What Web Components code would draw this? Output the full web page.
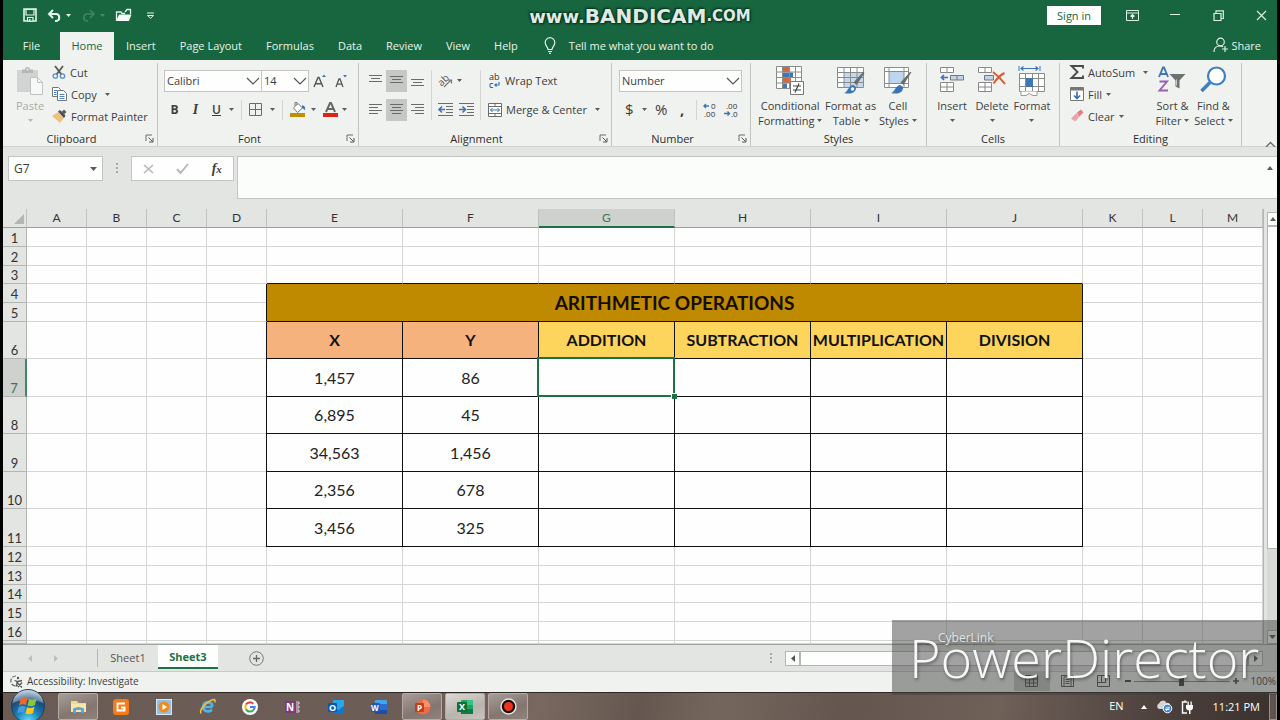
<!DOCTYPE html>
<html lang="en">
<head>
<meta charset="UTF-8">
<meta name="viewport" content="width=device-width, initial-scale=1.0">
<title>Sheet3 - Excel</title>
<style>
    :root {
        --green: #17663f;
        --ribbon: #f0f2f0;
        --chrome: #e3e5e3;
        --line: #c3c5c3;
        --grid: #d4d6d4;
        --ink: #3c3e3d;
        --ui: "Open Sans", "Noto Sans", sans-serif;
        --cell: Lato, "Liberation Sans", sans-serif;
    }

    body {
        margin: 0;
        background: #000;
        color: var(--ink);
        font-family: var(--ui);
        font-size: 11px;
        line-height: 15px;
    }
</style>
</head>
<body>
<excel-window></excel-window>

<script>
// Shared rules, form controls do not inherit the font by themselves
const BASE = `
    * { box-sizing: border-box; }
    button, select, input, textarea {
        font: inherit;
        color: inherit;
        margin: 0;
        padding: 0;
        border: 0;
        background: none;
        border-radius: 0;
    }
    button { display: inline-flex; align-items: center; justify-content: center; cursor: pointer; }
`;

// name: [width, height, markup]
const ICONS = {
    caret: [5, 3, '<path d="M0 0h5L2.500 3z" fill="#5a5c5b"/>'],
    caretLight: [5, 3, '<path d="M0 0h5L2.500 3z" fill="#e8f2ec"/>'],
    caretDim: [5, 3, '<path d="M0 0h5L2.500 3z" fill="#4c8a69"/>'],
    caretGray: [5, 3, '<path d="M0 0h5L2.500 3z" fill="#b4b6b5"/>'],
    chevron: [14, 8, '<path d="M1 1l6 6 6-6" fill="none" stroke="#555" stroke-width="1.2"/>'],
    launcher: [9, 9, '<path d="M1 7V1h6" fill="none" stroke="#6a6c6b"/><path d="M3.500 3.500l4 4M8 4v4H4" fill="none" stroke="#555"/>'],
    save: [14, 14, '<path d="M1 1h12v12H1z" fill="none" stroke="#e6f3eb" stroke-width="1.6"/><path d="M3 1.500h8V7H3zM4.500 9.500h5.500V13H4.500z" fill="#17663f" stroke="#e6f3eb" stroke-width="1.2"/><path d="M6 11h1.500v2H6z" fill="#e6f3eb"/>'],
    undo: [15, 13, '<path d="M2 5h7.500a3.600 3.600 0 0 1 0 7H8M6 1L2 5l4 4" fill="none" stroke="#e6f3eb" stroke-width="2"/>'],
    redo: [15, 13, '<path d="M13 5H5.500a3.600 3.600 0 0 0 0 7H7M9 1l4 4-4 4" fill="none" stroke="#3f8460" stroke-width="1.600"/>'],
    folder: [17, 14, '<path d="M1.500 12.500V4h4.500l1 1.500h3" fill="none" stroke="#e6f3eb" stroke-width="1.300"/><path d="M10 4l2-2.500h3.500V6" fill="none" stroke="#e6f3eb" stroke-width="1.300"/><path d="M1 13L4 6.500h12.500L14 13z" fill="#f4faf6"/>'],
    customise: [9, 7, '<path d="M1 1h7" stroke="#e6f3eb"/><path d="M1.500 3.500h6L4.500 6.300z" fill="none" stroke="#e6f3eb"/>'],
    ribbonOpts: [13, 11, '<path d="M.5.5h12v10H.5zM.5 3h12" fill="none" stroke="#dff0e6"/><path d="M6.500 9V5M4.500 6.500l2-2 2 2" fill="none" stroke="#dff0e6" stroke-width="1.200"/>'],
    minimise: [10, 2, '<path d="M0 .5h10" stroke="#dff0e6"/>'],
    restore: [11, 11, '<path d="M1 3.500h7v7H1zM3 3V.8h7.300V8.500H8.500" fill="none" stroke="#dff0e6" stroke-width="1.200"/>'],
    close: [11, 11, '<path d="M1 1l9 9M10 1l-9 9" stroke="#dff0e6" stroke-width="1.100"/>'],
    bulb: [12, 17, '<path d="M4 12.500c0-2.500-2.800-3.500-2.800-7a4.800 4.800 0 0 1 9.600 0c0 3.500-2.800 4.500-2.800 7zM4 14.500h4M5 16.300h2" fill="none" stroke="#dff0e6" stroke-width="1.200"/>'],
    share: [16, 16, '<circle cx="7.500" cy="5" r="3.800" fill="none" stroke="#dff0e6" stroke-width="1.200"/><path d="M1 15c0-4 2.500-6 6-6 1 0 2 .2 3 .8M12 9v6M9 12h6" fill="none" stroke="#dff0e6" stroke-width="1.200"/>'],
    paste: [28, 30, '<path d="M1 4h21v22H1z" fill="#d2d4d3"/><path d="M6 7V3.500h3a2.500 2.500 0 0 1 5 0h3V7z" fill="#b5b7b6"/><circle cx="11.500" cy="3.500" r="1" fill="#eee"/><path d="M14.500 11.500h7l5 5v12h-12z" fill="#f7f8f7" stroke="#c0c2c1"/><path d="M21.500 11.500v5h5" fill="none" stroke="#c0c2c1"/>'],
    cut: [14, 14, '<path d="M3 1l6.500 8.500M11 1L4.500 9.500" stroke="#5a5c5b" stroke-width="1.900"/><circle cx="3.300" cy="11" r="2.200" fill="none" stroke="#5b8fc4" stroke-width="1.300"/><circle cx="10.500" cy="11" r="2.200" fill="none" stroke="#5b8fc4" stroke-width="1.300"/>'],
    copy: [15, 14, '<path d="M.5.5h6l2 2v7h-8z" fill="#fff" stroke="#747675"/><path d="M5.500 3.500h6l3 3v7h-9z" fill="#fff" stroke="#747675"/><path d="M2 3.500h3M2 5.500h2.500M2 7.500h2.500M7.500 7.500h5M7.500 9.500h5M7.500 11.500h5" stroke="#4c85c0"/>'],
    painter: [15, 14, '<path d="M6 3l6 6-4 5-8-7z" fill="#efc27c"/><path d="M6 2.500l2-1.500 5.500 5.500L12 9z" fill="#4a4c4b"/><path d="M9.500 3L12 .5 14.500 3 12 5.500z" fill="#5a5c5b"/>'],
    growFont: [14, 14, '<path d="M1 13L5 3.500h1L10 13M2.700 9.700h5.800" fill="none" stroke="#555" stroke-width="1.400"/><path d="M9 3h4l-2-2.500z" fill="#3b74b4"/>'],
    shrinkFont: [14, 14, '<path d="M2 13l3-8h1l3 8M3.300 10.200h4.500" fill="none" stroke="#555" stroke-width="1.300"/><path d="M9 1h4l-2 2.500z" fill="#3b74b4"/>'],
    borders: [13, 13, '<path d="M.5.5h12v12H.5zM6.500.5v12M.5 6.500h12" fill="none" stroke="#6a6c6b"/>'],
    fillColor: [17, 15, '<path d="M0 11h15v4H0z" fill="#bf8f00"/><path d="M3.500 6L8 1.500 12.500 6 7.500 10.500z" fill="#fff" stroke="#777"/><path d="M5 4V.5h2V3" fill="none" stroke="#777"/><path d="M12 3.500c3 0 3.500 2 3 5-.8-1.500-1.500-2-3-2z" fill="#3b74b4"/>'],
    fontColor: [15, 15, '<path d="M0 11h15v4H0z" fill="#dd2416"/><path d="M3 10L7 1h1l4 9M4.500 7h6" fill="none" stroke="#666" stroke-width="1.900"/>'],
    alignTop: [13, 11, '<path d="M0 .5h13M2 3.500h9M0 6.500h13" stroke="#6a6c6b"/>'],
    alignMid: [13, 11, '<path d="M0 1.500h13M2 4.500h9M0 7.500h13" stroke="#6a6c6b"/>'],
    alignBottom: [13, 13, '<path d="M0 5.500h13M2 8.500h9M0 11.500h13" stroke="#6a6c6b"/>'],
    alignLeft: [13, 11, '<path d="M0 .5h13M0 3.500h9M0 6.500h13M0 9.500h9" stroke="#6a6c6b"/>'],
    alignCenter: [13, 11, '<path d="M0 .5h13M2 3.500h9M0 6.500h13M2 9.500h9" stroke="#6a6c6b"/>'],
    alignRight: [13, 11, '<path d="M0 .5h13M4 3.500h9M0 6.500h13M4 9.500h9" stroke="#6a6c6b"/>'],
    orient: [15, 14, '<text x="0" y="10" transform="rotate(-45 5 7)" font-size="10" font-family="Open Sans" fill="#555">ab</text><path d="M6 13l7-7M10 6h3.500v3.500" fill="none" stroke="#777" stroke-width="1.200"/>'],
    outdent: [15, 13, '<path d="M0 .5h15M8 3.500h7M8 6.500h7M8 9.500h7M0 12.500h15" stroke="#6a6c6b"/><path d="M7 6.500H1.500M4 3.500l-3 3 3 3" fill="none" stroke="#3b74b4" stroke-width="1.600"/>'],
    indent: [15, 13, '<path d="M0 .5h15M8 3.500h7M8 6.500h7M8 9.500h7M0 12.500h15" stroke="#6a6c6b"/><path d="M0 6.500h5.500M3.500 3.500l3 3-3 3" fill="none" stroke="#3b74b4" stroke-width="1.600"/>'],
    wrap: [13, 14, '<text x="1" y="6" font-size="9" font-family="Open Sans" fill="#333">ab</text><text x="1" y="14" font-size="9" font-family="Open Sans" fill="#333">c</text><path d="M11 8v3H7M8.500 9.500L7 11l1.500 1.500" fill="none" stroke="#3b74b4" stroke-width="1.200"/>'],
    merge: [14, 14, '<path d="M.5.5h13v13H.5zM.5 3.500h13M.5 10.500h13M7 .5v3M7 10.500v3" fill="#fff" stroke="#6a6c6b"/><path d="M2.500 7h9M4.500 5l-2 2 2 2M9.500 5l2 2-2 2" fill="none" stroke="#3b74b4"/>'],
    incDec: [14, 14, '<text x="8" y="6" font-size="8" font-family="Open Sans" fill="#333">0</text><text x="1" y="14" font-size="8" font-family="Open Sans" fill="#333">.00</text><path d="M6 3H1M3 1L1 3l2 2" fill="none" stroke="#3b74b4" stroke-width="1.400"/>'],
    decDec: [14, 14, '<text x="2" y="6" font-size="8" font-family="Open Sans" fill="#333">.00</text><text x="7" y="14" font-size="8" font-family="Open Sans" fill="#333">.0</text><path d="M0 10.500h5M3.500 8.500l2 2-2 2" fill="none" stroke="#3b74b4" stroke-width="1.400"/>'],
    condFormat: [28, 29, '<path d="M.5.5h25v22H.5z" fill="#fff"/><path d="M7 1h6v5H7zM7 12h8v5H7z" fill="#d0693f"/><path d="M7 6.500h10v5H7zM7 17.500h4v5H7z" fill="#3c78b4"/><path d="M.5.500h25v22H.5zM.5 6h25M.5 11.500h25M.5 17h25M6.500.5v22M13.500.5v22M19.500.5v22" fill="none" stroke="#8a8c8b"/><path d="M14.500 15.500h13v13h-13z" fill="#fff" stroke="#777"/><path d="M17 20h8M17 24h8M23 17.500l-4 9" stroke="#444" stroke-width="1.200"/>'],
    tableFormat: [28, 29, '<path d="M.5 1.500h26v20H.5z" fill="#fff"/><path d="M7 7h19v14H7z" fill="#c4d9ee"/><path d="M.5 1.500h26v20H.5zM.5 6.500h26M.5 11.500h26M.5 16.500h26M7 1.500v20M13.500 1.500v20M20 1.500v20" fill="none" stroke="#8a8c8b"/><path d="M27.500 7l-8 12-3-2.500L26 6z" fill="#6a6c6b"/><path d="M7 27c4-1 4-7 9-8 3 1 4 3 2 6-2.500 3-7 3-11 2z" fill="#3b74b4"/><circle cx="15.500" cy="23" r="1.800" fill="#fff"/>'],
    cellStyles: [28, 29, '<path d="M.5 1.500h24v20H.5z" fill="#fff"/><path d="M5 6h15v11H5z" fill="#bdd5ee"/><path d="M.5 1.500h24v20H.5zM.5 5.500h24M.5 17.500h24M5 1.500v20M20 1.500v20" fill="none" stroke="#8a8c8b"/><path d="M27.500 6l-8 13-3-2.500L26 6z" fill="#6a6c6b"/><path d="M7 27c4-1 4-7 9-8 3 1 4 3 2 6-2.500 3-7 3-11 2z" fill="#3b74b4"/>'],
    insertCells: [26, 27, '<path d="M1.500 1.500h13v5h-13zM8 1.500v5M1.500 16.500h13v9h-13zM8 16.500v9M1.500 21h13" fill="#fff" stroke="#888"/><path d="M11.500 9.500h13v4.500h-13zM18 9.500v4.500" fill="#c4d4e6" stroke="#777"/><path d="M9 11.500H2.500M5 9l-2.500 2.500L5 14" fill="none" stroke="#3b74b4" stroke-width="1.700"/>'],
    deleteCells: [28, 27, '<path d="M.5 1.500h13v5H.5zM7 1.500v5M.5 16.500h13v9H.5zM7 16.500v9M.5 21h13" fill="#fff" stroke="#888"/><path d="M6.500 9.500h9v4.500h-9z" fill="#c4d4e6" stroke="#777"/><path d="M15 6c4 3 8 7 12 12M26.500 7c-4 2-8 6-11 10.500" fill="none" stroke="#dc5a30" stroke-width="2"/>'],
    formatCells: [28, 30, '<path d="M1 0v5M22 0v5" stroke="#3b74b4"/><path d="M3 2.500h17M5.500.5l-2.500 2 2.500 2M17.500.5l2.500 2-2.500 2" fill="none" stroke="#3b74b4" stroke-width="1.200"/><path d="M1.500 7.500h25v18h-25zM1.500 12.500h25M1.500 20.500h25M7.500 7.500v18M14.500 7.500v18M20.500 7.500v18" fill="#fff" stroke="#8a8c8b"/><path d="M8 12h7v9H8z" fill="#3c78b4"/><path d="M3 25.500v4h5l3-2 4 2h4v-4" fill="#fff" stroke="#999"/>'],
    sigma: [14, 14, '<path d="M13 3.500V1H1.500L7.500 7l-6 6H13v-2.500" fill="none" stroke="#4a4c4b" stroke-width="1.900"/>'],
    fill: [14, 14, '<path d="M.5.500h13v13H.5z" fill="#fff" stroke="#777"/><path d="M.5.500h13v3H.5z" fill="#777"/><path d="M7 4.500v7M4 8.500l3 3 3-3" fill="none" stroke="#3b74b4" stroke-width="1.700"/>'],
    clear: [14, 14, '<path d="M7 3.500L11 .5l2.500 3L9 8z" fill="#e0808a"/><path d="M6.500 4l2.700 4-4 4.500L1 9.500z" fill="#eda2a8"/>'],
    sortFilter: [28, 28, '<path d="M1 11L5 1.500h1L10 11M2.600 8h6" fill="none" stroke="#3c78b4" stroke-width="1.900"/><path d="M1.500 15.500h7.500l-7.500 9H10" fill="none" stroke="#9a5fb4" stroke-width="1.900"/><path d="M11.500 8h16l-6 6.500v8l-4-2v-6z" fill="#6f7170"/><path d="M18.500 13.500v6" stroke="#ccc"/>'],
    find: [28, 28, '<circle cx="17.500" cy="10" r="8.500" fill="#fff" stroke="#3e7fc1" stroke-width="2.200"/><path d="M11 16.500L2.500 25" stroke="#3e7fc1" stroke-width="3.600"/>'],
    collapse: [11, 7, '<path d="M1 6l4.500-4.500L10 6" fill="none" stroke="#666" stroke-width="1.300"/>'],
    cross: [11, 10, '<path d="M1 1l9 8M10 1L1 9" stroke="#b6b8b7" stroke-width="1.600"/>'],
    check: [13, 11, '<path d="M1 6l3.500 4L12 1" fill="none" stroke="#b6b8b7" stroke-width="1.900"/>'],
    dots: [3, 11, '<path d="M0 0h2v2H0zM0 4h2v2H0zM0 8h2v2H0z" fill="#a8aaa9"/>'],
    caretUp: [6, 4, '<path d="M0 4h6L3 0z" fill="#5a5c5b"/>'],
    caretDown: [7, 4, '<path d="M0 0h7L3.500 4z" fill="#5a5c5b"/>'],
    left: [4, 7, '<path d="M4 0v7L0 3.500z" fill="currentColor"/>'],
    right: [4, 7, '<path d="M0 0v7l4-3.500z" fill="currentColor"/>'],
    plus: [15, 15, '<circle cx="7.500" cy="7.500" r="6.800" fill="none" stroke="#777"/><path d="M7.500 4v7M4 7.500h7" stroke="#666" stroke-width="1.300"/>'],
    access: [14, 13, '<path d="M7 1a5 5 0 1 0 2 9.500" fill="none" stroke="#666" stroke-width="1.200" stroke-dasharray="4 1.500"/><circle cx="9" cy="3" r="1.200" fill="#555"/><path d="M5.500 5.500l3.500 1 4-1M8 6.500v2l-1 3M7.500 7l5.500 5.500M13 7.500l-4 4.500" fill="none" stroke="#555" stroke-width="1.300"/>'],
    viewNormal: [13, 12, '<path d="M.5.500h12v11H.5zM.5 4h12M.5 8h12M4.500.5v11M8.500.5v11" fill="none" stroke="#555"/>'],
    viewPage: [13, 12, '<path d="M.5.500h12v11H.5zM3 2h7v9.500H3zM4.500 4.500h4M4.500 6.500h4M4.500 8.500h4" fill="none" stroke="#555"/>'],
    viewBreak: [13, 12, '<path d="M.5.500h12v11M.5.500v11h12M4.500.5v7M8.500.5v7H.5" fill="none" stroke="#555"/>'],
    zoomOut: [8, 8, '<path d="M1 4h6" stroke="#444" stroke-width="2"/>'],
    zoomIn: [8, 8, '<path d="M1 4h6M4 1v6" stroke="#444" stroke-width="1.600"/>'],
    orb: [36, 34, '<defs><radialGradient id="o" cx="50%" cy="95%" r="90%"><stop offset="0" stop-color="#5fe0f8"/><stop offset=".4" stop-color="#1e7fb8"/><stop offset=".75" stop-color="#1a4a78"/><stop offset="1" stop-color="#9fb8cc"/></radialGradient></defs><circle cx="18" cy="18" r="16.500" fill="url(#o)" stroke="#24445e"/><path d="M3 15a15 13 0 0 1 30 0c-8-4-22-4-30 0z" fill="#fff" fill-opacity=".3"/><path d="M10.500 11.500c2.500-2 5-2 7-1l-1.500 6.500c-2-1-4.500-1-7 .8z" fill="#f0672c"/><path d="M19 11c2.500 1.200 5 1 7.500-.5L25 17c-2.500 1.500-5 1.500-7.500.5z" fill="#8cc63e"/><path d="M8.500 19.500c2.500-1.800 5-1.800 7-.8L14 25c-2-1-4.500-1-7 .8z" fill="#3f9de0"/><path d="M17 19.200c2.500 1.200 5 1 7.500-.5L23 25c-2.500 1.500-5 1.500-7.500.5z" fill="#fcc820"/>'],
    explorer: [17, 15, '<path d="M1 2h6l1.500 2H16v9H1z" fill="#f3d98a"/><path d="M1 5h15v8H1z" fill="#f8e6a8"/><path d="M3 14V9.500q5.500-3 11 0V14h-3v-3H6v3z" fill="#5ba8d8"/>'],
    gApp: [16, 16, '<rect width="16" height="16" rx="3" fill="#f47b16"/><path d="M12 4.500H4.500v7h7V8.500H8" fill="none" stroke="#fff" stroke-width="1.900"/>'],
    player: [16, 16, '<rect x=".5" y=".5" width="15" height="15" fill="#8fc1e6" stroke="#d7e9f6"/><circle cx="8" cy="8" r="5.500" fill="#f08a1c"/><path d="M6.500 5v6l4.500-3z" fill="#fff"/>'],
    ie: [17, 17, '<path d="M13.500 9H4.200c0 5 6.800 5.500 8.500 2.500M4.200 8.500c.5-5.500 8.800-5.500 9.300 0" fill="none" stroke="#4fb4ea" stroke-width="2.600"/><path d="M2 15.500C-.5 12 9 2 15.500 1.500c1 .5.500 2 .3 3" fill="none" stroke="#efc340" stroke-width="1.500"/>'],
    google: [16, 16, '<circle cx="8" cy="8" r="8" fill="#fff"/><path d="M11.300 4.700A4.700 4.700 0 0 0 4 5.600" fill="none" stroke="#e94335" stroke-width="2"/><path d="M4 5.600a4.700 4.700 0 0 0 0 4.800" fill="none" stroke="#fabb05" stroke-width="2"/><path d="M4 10.400a4.700 4.700 0 0 0 7 1.100" fill="none" stroke="#34a853" stroke-width="2"/><path d="M11 11.500A4.500 4.500 0 0 0 12.700 8H8" fill="none" stroke="#4285f4" stroke-width="2"/>'],
    onenote: [16, 16, '<rect x="0" y="2" width="11" height="12" fill="#80397b"/><text x="1" y="12" font-size="10" font-weight="700" font-family="Open Sans" fill="#fff">N</text><path d="M11 3h3v2h-3M11 7h3v2h-3M11 11h3v2h-3" fill="none" stroke="#e6cfe4"/>'],
    outlook: [16, 16, '<rect x="5" y="1" width="11" height="13" fill="#28a8ea"/><path d="M5 7l5.500 4L16 7v8H5z" fill="#0f78d4"/><rect y="4" width="9" height="9" rx="1" fill="#0a5aa8"/><text x="1" y="12" font-size="9" font-weight="700" font-family="Open Sans" fill="#fff">O</text>'],
    word: [16, 16, '<rect x="4" y="1" width="12" height="14" rx="1" fill="#41a5ee"/><path d="M4 5h12v10H4z" fill="#2b6fce"/><path d="M4 11h12v4H4z" fill="#1a4fa8"/><rect y="4" width="9" height="9" rx="1" fill="#185abd"/><text x="0" y="12" font-size="8" font-weight="700" font-family="Open Sans" fill="#fff">W</text>'],
    ppt: [17, 16, '<circle cx="9" cy="8" r="7.500" fill="#ed6c47"/><path d="M9 .5A7.500 7.500 0 0 1 16.500 8H9z" fill="#ff8f6b"/><rect x="1" y="4" width="9" height="9" rx="1" fill="#c43e1c"/><text x="3" y="12" font-size="8" font-weight="700" font-family="Open Sans" fill="#fff">P</text>'],
    xl: [16, 16, '<rect x="4" y="1" width="12" height="14" rx="1" fill="#21a366"/><path d="M10 1h6v5h-6z" fill="#33c481"/><path d="M4 10h12v5H4z" fill="#107c41"/><rect y="3" width="10" height="10" rx="1" fill="#0f7038"/><text x="2" y="11" font-size="9" font-weight="700" font-family="Open Sans" fill="#fff">X</text>'],
    record: [17, 17, '<circle cx="8.500" cy="8.500" r="7.500" fill="#111" stroke="#e8e4e0" stroke-width="1.500"/><circle cx="8.500" cy="8.500" r="4.500" fill="#f0341c"/>'],
    trayUp: [6, 4, '<path d="M0 4h6L3 0z" fill="#fff"/>'],
    cloud: [16, 13, '<path d="M3 9a3 3 0 0 1 0-5.500A4 4 0 0 1 10.500 3 3 3 0 0 1 12 9z" fill="#d7d4d2"/><circle cx="11.500" cy="8.500" r="4.300" fill="#3f83cc" stroke="#fff"/><path d="M9.500 8h4l-1.300-1.300M13.500 9.500h-4l1.300 1.300" fill="none" stroke="#fff"/>'],
    power: [14, 14, '<path d="M6 13H1.500V2H6" fill="none" stroke="#fff" stroke-width="1.400"/><path d="M3 1h2" stroke="#fff"/><path d="M5 5h7v2.500a3.500 3 0 0 1-7 0zM8 10h1.500v4H8zM6.500 1.500h1.300V5H6.500zM9.500 1.500h1.300V5H9.500z" fill="#fff"/>']
};

class XlIcon extends HTMLElement {
    connectedCallback() {
        if (this.shadowRoot) return;
        this.attachShadow({ mode: 'open' });
        const [w, h, body] = ICONS[this.getAttribute('name')];
        this.shadowRoot.innerHTML = `
            <style>
                :host { display: inline-flex; flex: none; }
                svg { display: block; overflow: visible; }
            </style>
            <svg width="${w}" height="${h}" viewBox="0 0 ${w} ${h}" aria-hidden="true">${body}</svg>
        `;
    }
}

// Base for everything with a static template
class XlElement extends HTMLElement {
    connectedCallback() {
        if (this.shadowRoot) return;
        this.attachShadow({ mode: 'open' });
        this.shadowRoot.innerHTML = `<style>${BASE}${this.styles()}</style>${this.markup()}`;
    }
}

class ExcelWindow extends XlElement {
    styles() {
        return `
            :host {
                display: flex;
                flex-direction: column;
                position: relative;
                height: 100vh;
                margin: 0 3px;
                overflow: hidden;
                background: var(--chrome);
            }
            sheet-grid { flex: 1; min-height: 0; }
        `;
    }

    markup() {
        return `
            <title-bar></title-bar>
            <ribbon-tabs></ribbon-tabs>
            <excel-ribbon></excel-ribbon>
            <formula-bar></formula-bar>
            <sheet-grid></sheet-grid>
            <sheet-tabs></sheet-tabs>
            <status-bar></status-bar>
            <task-bar></task-bar>
            <director-mark></director-mark>
        `;
    }
}

class TitleBar extends XlElement {
    styles() {
        return `
            :host {
                display: flex;
                align-items: center;
                position: relative;
                height: 32px;
                padding: 0 0 2px 20px;
                background: var(--green);
                color: #fff;
            }
            .quick { display: flex; align-items: center; flex: 1; }
            .quick button { gap: 4px; margin-right: 10px; }
            .quick button:last-child { margin-left: 4px; }
            .sign { height: 19px; padding: 0 10px; margin-right: 15px; background: #fdfefd; color: var(--green); }
            .controls { display: flex; gap: 11px; }
            .controls button { width: 32px; height: 24px; }
            .mark {
                position: absolute;
                inset: 0;
                display: flex;
                align-items: center;
                justify-content: center;
                pointer-events: none;
                font-family: "DejaVu Sans", sans-serif;
                font-weight: 700;
                font-size: 18px;
                color: #dfeae4;
                text-shadow: 0 0 3px #06331b, 1px 1px 2px #06331b, -1px -1px 2px #06331b;
            }
            .mark b { font-size: 20px; }
            .mark small { font-size: 15px; }
        `;
    }

    markup() {
        return `
            <div class="quick">
                <button aria-label="Save"><xl-icon name="save"></xl-icon></button>
                <button aria-label="Undo"><xl-icon name="undo"></xl-icon><xl-icon name="caretLight"></xl-icon></button>
                <button aria-label="Redo"><xl-icon name="redo"></xl-icon><xl-icon name="caretDim"></xl-icon></button>
                <button aria-label="Open"><xl-icon name="folder"></xl-icon></button>
                <button aria-label="Customize"><xl-icon name="customise"></xl-icon></button>
            </div>
            <button class="sign">Sign in</button>
            <div class="controls">
                <button aria-label="Ribbon display options"><xl-icon name="ribbonOpts"></xl-icon></button>
                <button aria-label="Minimize"><xl-icon name="minimise"></xl-icon></button>
                <button aria-label="Restore"><xl-icon name="restore"></xl-icon></button>
                <button aria-label="Close"><xl-icon name="close"></xl-icon></button>
            </div>
            <div class="mark"><span>www.</span><b>BANDICAM</b><small>.COM</small></div>
        `;
    }
}

class RibbonTabs extends XlElement {
    styles() {
        return `
            :host { display: flex; height: 28px; padding-right: 16px; background: var(--green); color: #e6f3eb; }
            nav { display: flex; flex: 1; }
            button { padding: 0 12px 2px; white-space: nowrap; }
            .file { width: 57px; }
            .active { width: 54px; background: var(--ribbon); color: var(--green); }
            .tell { gap: 13px; margin-left: 2px; }
            .share { padding: 0 0 2px; gap: 2px; }
        `;
    }

    markup() {
        const names = ['Insert', 'Page Layout', 'Formulas', 'Data', 'Review', 'View', 'Help'];
        return `
            <nav>
                <button class="file">File</button>
                <button class="active">Home</button>
                ${names.map(name => `<button>${name}</button>`).join('')}
                <button class="tell"><xl-icon name="bulb"></xl-icon>Tell me what you want to do</button>
            </nav>
            <button class="share"><xl-icon name="share"></xl-icon>Share</button>
        `;
    }
}

// One titled section of the ribbon, launcher adds the corner arrow
class RibbonGroup extends XlElement {
    styles() {
        return `
            :host { display: flex; flex-direction: column; position: relative; min-width: 0; margin: 3px 0 4px; border-right: 1px solid var(--line); }
            .content { display: flex; height: 68px; }
            .name { height: 15px; text-align: center; color: #2c2e2d; }
            :host([launcher]) .name { padding-right: 17px; }
            button { position: absolute; right: 3px; top: 71px; }
        `;
    }

    markup() {
        return `
            <div class="content"><slot></slot></div>
            <div class="name">${this.getAttribute('name')}</div>
            ${this.hasAttribute('launcher') ? `<button aria-label="More options"><xl-icon name="launcher"></xl-icon></button>` : ''}
        `;
    }
}

class RibbonButton extends XlElement {
    styles() {
        return `
            :host { display: flex; min-width: 0; }
            button { flex: 1; min-width: 21px; height: 22px; gap: 4px; white-space: nowrap; }
            :host([text]) button, :host([far]) button { justify-content: flex-start; }
            :host([pressed]) button { background: #c6c8c6; }
            :host([far]) xl-icon:last-child { margin-left: 4px; }
        `;
    }

    markup() {
        const icon = this.getAttribute('icon');
        const text = this.getAttribute('text');
        const arrow = this.hasAttribute('arrow');
        return `
            <button aria-label="${text || this.getAttribute('hint') || icon}">
                ${icon ? `<xl-icon name="${icon}"></xl-icon>` : ''}
                ${text ? `<span>${text}</span>` : ''}<slot></slot>
                ${arrow ? '<xl-icon name="caret"></xl-icon>' : ''}
            </button>
        `;
    }
}

class RibbonTile extends XlElement {
    styles() {
        return `
            :host { display: flex; justify-content: center; }
            button { flex-direction: column; justify-content: flex-start; padding-top: 3px; white-space: nowrap; }
            .pic { display: flex; height: 32px; }
            .row { display: flex; align-items: center; gap: 3px; height: 15px; }
            :host([disabled]) button { color: #a9abaa; }
        `;
    }

    markup() {
        const second = this.getAttribute('second') || '';
        const caret = this.hasAttribute('disabled') ? 'caretGray' : 'caret';
        return `
            <button>
                <span class="pic"><xl-icon name="${this.getAttribute('icon')}"></xl-icon></span>
                <span class="row">${this.getAttribute('first')}</span>
                <span class="row">${second}<xl-icon name="${caret}"></xl-icon></span>
            </button>
        `;
    }
}

class RibbonSelect extends XlElement {
    styles() {
        return `
            :host { display: block; position: relative; }
            select { appearance: none; display: block; width: 100%; height: 22px; padding: 0 2px; background: #fdfefd; border: 1px solid var(--line); }
            xl-icon { position: absolute; right: 2px; top: 7px; pointer-events: none; }
        `;
    }

    markup() {
        return `
            <select aria-label="${this.getAttribute('hint')}"><option>${this.getAttribute('value')}</option></select>
            <xl-icon name="chevron"></xl-icon>
        `;
    }
}

class ExcelRibbon extends XlElement {
    styles() {
        return `
            :host {
                display: grid;
                grid-template-columns: 155fr 201fr 253fr 139fr 176fr 133fr 182fr 35fr;
                height: 87px;
                background: var(--ribbon);
                border-bottom: 1px solid #d0d2d0;
            }
            .stack { display: flex; flex-direction: column; margin-top: -2px; }
            .rows { display: grid; grid-template-rows: 29px 29px; align-items: center; margin-top: 3px; }
            .wide { flex: 1; }
            .row { display: flex; align-items: center; }
            .sep { width: 1px; height: 20px; margin: 0 7px; background: #d4d6d4; }
            .sep.tight { margin: 0 3px; }
            .after { margin-left: 7px; }
            .glyph { margin-left: 6px; }
            .percent { margin-left: 4px; }
            .align { display: flex; gap: 3px; }
            .tall { width: 1px; height: 50px; margin-top: 7px; background: #d4d6d4; }
            .orient { padding-left: 3px; }
            .texts { padding-left: 4px; }
            .fold { display: flex; align-items: flex-end; justify-content: flex-end; padding-right: 1px; padding-bottom: 2px; }
            .clip { padding-left: 13px; gap: 8px; display: flex; }
            b, i, u { font-size: 12px; }
            i { font-family: "Liberation Serif", serif; font-weight: 700; font-size: 14px; }
            u { font-weight: 600; }
            .symbol { font-size: 15px; }
            .font { padding-left: 6px; }
            .selects { display: grid; grid-template-columns: 97fr 47fr 21fr 21fr 6fr; align-items: center; }
            .selects ribbon-select + ribbon-select { margin-left: -1px; }
            .alignment { padding-left: 6px; }
            .number { padding: 0 8px 0 7px; }
            .tiles { display: grid; flex: 1; }
            .styles { grid-template-columns: 66fr 54fr 40fr; padding: 0 8px 0 6px; }
            .cells { grid-template-columns: 1fr 1fr 1fr; padding: 0 7px 0 5px; }
            .editing { grid-template-columns: 1fr 1fr; padding-right: 7px; }
            .edit { width: 92px; padding-left: 10px; }
        `;
    }

    markup() {
        return `
            <ribbon-group name="Clipboard" launcher>
                <div class="clip">
                    <ribbon-tile icon="paste" first="Paste" disabled></ribbon-tile>
                    <div class="stack">
                        <ribbon-button icon="cut" text="Cut"></ribbon-button>
                        <ribbon-button icon="copy" text="Copy" arrow far></ribbon-button>
                        <ribbon-button icon="painter" text="Format Painter"></ribbon-button>
                    </div>
                </div>
            </ribbon-group>

            <ribbon-group name="Font" launcher>
                <div class="rows wide font">
                    <div class="selects">
                        <ribbon-select value="Calibri" hint="Font"></ribbon-select>
                        <ribbon-select value="14" hint="Font size"></ribbon-select>
                        <ribbon-button icon="growFont" hint="Increase font size"></ribbon-button>
                        <ribbon-button icon="shrinkFont" hint="Decrease font size"></ribbon-button>
                    </div>
                    <div class="row">
                        <ribbon-button hint="Bold"><b>B</b></ribbon-button>
                        <ribbon-button hint="Italic"><i>I</i></ribbon-button>
                        <ribbon-button class="glyph" hint="Underline" arrow far><u>U</u></ribbon-button>
                        <span class="sep"></span>
                        <ribbon-button icon="borders" arrow far></ribbon-button>
                        <span class="sep"></span>
                        <ribbon-button icon="fillColor" arrow></ribbon-button>
                        <ribbon-button class="after" icon="fontColor" arrow></ribbon-button>
                    </div>
                </div>
            </ribbon-group>

            <ribbon-group name="Alignment" launcher>
                <div class="align alignment">
                    <div class="rows">
                        <div class="row">
                            <ribbon-button icon="alignTop"></ribbon-button>
                            <ribbon-button icon="alignMid" pressed></ribbon-button>
                            <ribbon-button icon="alignBottom"></ribbon-button>
                        </div>
                        <div class="row">
                            <ribbon-button icon="alignLeft"></ribbon-button>
                            <ribbon-button icon="alignCenter" pressed></ribbon-button>
                            <ribbon-button icon="alignRight"></ribbon-button>
                        </div>
                    </div>
                    <span class="tall"></span>
                    <div class="rows">
                        <div class="row orient"><ribbon-button icon="orient" arrow></ribbon-button></div>
                        <div class="row">
                            <ribbon-button icon="outdent"></ribbon-button>
                            <ribbon-button icon="indent"></ribbon-button>
                        </div>
                    </div>
                    <span class="tall"></span>
                    <div class="rows texts">
                        <ribbon-button icon="wrap" text="Wrap Text"></ribbon-button>
                        <ribbon-button icon="merge" text="Merge &amp; Center" arrow far></ribbon-button>
                    </div>
                </div>
            </ribbon-group>

            <ribbon-group name="Number" launcher>
                <div class="rows wide number">
                    <ribbon-select value="Number" hint="Number format"></ribbon-select>
                    <div class="row">
                        <ribbon-button class="glyph" hint="Currency" arrow far><span class="symbol">$</span></ribbon-button>
                        <ribbon-button class="percent" hint="Percent"><span class="symbol">%</span></ribbon-button>
                        <ribbon-button hint="Comma"><b class="symbol">,</b></ribbon-button>
                        <span class="sep tight"></span>
                        <ribbon-button icon="incDec"></ribbon-button>
                        <ribbon-button icon="decDec"></ribbon-button>
                    </div>
                </div>
            </ribbon-group>

            <ribbon-group name="Styles">
                <div class="tiles styles">
                    <ribbon-tile icon="condFormat" first="Conditional" second="Formatting"></ribbon-tile>
                    <ribbon-tile icon="tableFormat" first="Format as" second="Table"></ribbon-tile>
                    <ribbon-tile icon="cellStyles" first="Cell" second="Styles"></ribbon-tile>
                </div>
            </ribbon-group>

            <ribbon-group name="Cells">
                <div class="tiles cells">
                    <ribbon-tile icon="insertCells" first="Insert"></ribbon-tile>
                    <ribbon-tile icon="deleteCells" first="Delete"></ribbon-tile>
                    <ribbon-tile icon="formatCells" first="Format"></ribbon-tile>
                </div>
            </ribbon-group>

            <ribbon-group name="Editing">
                <div class="stack edit">
                    <ribbon-button icon="sigma" text="AutoSum" arrow far></ribbon-button>
                    <ribbon-button icon="fill" text="Fill" arrow></ribbon-button>
                    <ribbon-button icon="clear" text="Clear" arrow></ribbon-button>
                </div>
                <div class="tiles editing">
                    <ribbon-tile icon="sortFilter" first="Sort &amp;" second="Filter"></ribbon-tile>
                    <ribbon-tile icon="find" first="Find &amp;" second="Select"></ribbon-tile>
                </div>
            </ribbon-group>

            <div class="fold"><button aria-label="Collapse the ribbon"><xl-icon name="collapse"></xl-icon></button></div>
        `;
    }
}

class FormulaBar extends XlElement {
    styles() {
        return `
            :host { display: flex; align-items: flex-start; height: 62px; padding: 9px 0 0 5px; background: var(--chrome); }
            .name, .tools { display: flex; align-items: center; height: 25px; background: #fdfefd; border: 1px solid var(--line); }
            .name { width: 95px; padding-right: 5px; }
            .name input { flex: 1; min-width: 0; padding-left: 5px; font-size: 12px; }
            .grip { display: flex; justify-content: center; width: 28px; padding-top: 7px; }
            .tools { width: 103px; justify-content: space-around; }
            .fx { font: italic 700 14px "Liberation Serif", serif; }
            .fx small { font-size: 11px; }
            .entry { display: flex; flex: 1; height: 43px; margin-left: 3px; background: #fbfdfb; border: 1px solid var(--line); border-right: 0; }
            textarea { flex: 1; resize: none; outline: 0; }
            .entry button { align-self: flex-start; padding: 9px 4px 0; }
        `;
    }

    markup() {
        return `
            <div class="name"><input aria-label="Name box" value="G7"><xl-icon name="caretDown"></xl-icon></div>
            <div class="grip"><xl-icon name="dots"></xl-icon></div>
            <div class="tools">
                <button aria-label="Cancel"><xl-icon name="cross"></xl-icon></button>
                <button aria-label="Enter"><xl-icon name="check"></xl-icon></button>
                <button class="fx" aria-label="Insert function">f<small>x</small></button>
            </div>
            <div class="entry">
                <textarea aria-label="Formula"></textarea>
                <button aria-label="Expand"><xl-icon name="caretUp"></xl-icon></button>
            </div>
        `;
    }
}

class SheetGrid extends XlElement {
    styles() {
        return `
            :host { display: flex; border-bottom: 1px solid #a2a4a2; font-family: var(--cell); }
            table { flex: 1; width: 100%; height: 100%; table-layout: fixed; border-collapse: separate; border-spacing: 0; background: #fdfefd; color: #222; }
            th, td { padding: 0; border: 0 solid var(--grid); border-width: 0 1px 1px 0; text-align: center; overflow: hidden; }
            thead th { height: 19px; background: var(--chrome); border-right-color: #c0c2c0; border-bottom-color: #9c9e9c; font-size: 12px; font-weight: 400; line-height: 16px; color: #333; }
            thead th.on { background: #cfd1cf; border-bottom: 2px solid #1e7145; color: #3b7457; }
            tbody th { background: var(--chrome); border-color: #b4b6b4; font-size: 13px; font-weight: 400; line-height: 16px; vertical-align: bottom; color: #333; }
            tbody th.on { background: #cfd1cf; border-right: 2px solid #3c8a63; color: #3b7457; }
            tr { height: 18px; }
            tr.tall { height: 36px; }
            tr.rest { height: 3px; }
            td { font-size: 16px; line-height: 20px; }
            td.r { border-right-color: #111; }
            td.b { border-bottom-color: #111; }
            td.first { box-shadow: -1px 0 0 #111; }
            td.title { background: #c08a00; font-size: 19px; font-weight: 700; color: #140d00; }
            td.xy { background: #f5b27c; font-weight: 700; color: #111; }
            td.op { background: #fdd55c; font-weight: 700; color: #111; }
            td.sel { position: relative; overflow: visible; }
            td.sel::before { content: ""; position: absolute; inset: -2px -1px -1px -2px; border: 2px solid #1e7145; }
            td.sel::after { content: ""; position: absolute; right: -3px; bottom: -3px; width: 5px; height: 5px; background: #1e7145; border: 1px solid #fff; border-width: 1px 0 0 1px; }
            .corner svg { display: block; margin: 1px 1px 0 auto; }
            .scroll { display: flex; flex-direction: column; width: 14px; padding: 3px 0 0 3px; border-left: 1px solid #b4b6b4; background: var(--chrome); }
            .scroll button { height: 14px; border: 1px solid #b4b6b4; border-right: 0; background: #fdfefd; }
            .track { flex: 1; background: #d8dad8; }
            .thumb { height: 80%; background: #fdfefd; border: 1px solid #b4b6b4; border-right: 0; }
        `;
    }

    markup() {
        const columns = 'ABCDEFGHIJKLM'.split('');
        const wide = 'EFGHIJ';
        const headings = ['X', 'Y', 'ADDITION', 'SUBTRACTION', 'MULTIPLICATION', 'DIVISION'];
        const values = [['1,457', '86'], ['6,895', '45'], ['34,563', '1,456'], ['2,356', '678'], ['3,456', '325']];

        const cell = (row, col) => {
            const inside = wide.indexOf(col);
            const inTable = row >= 4 && row <= 11;
            const first = inside === 0 ? ' first' : '';
            if (inside < 0) return inTable && col === 'D' ? '<td class="r"></td>' : '<td></td>';
            if (row === 3) return '<td class="b"></td>';
            if (row === 4) return inside === 0 ? '<td class="r b first title" colspan="6" rowspan="2">ARITHMETIC OPERATIONS</td>' : '';
            if (row === 5) return '';
            if (row === 6) return `<td class="r b ${inside < 2 ? 'xy' : 'op'}${first}">${headings[inside]}</td>`;
            if (inTable) {
                const selected = row === 7 && col === 'G' ? ' sel' : '';
                return `<td class="r b${first}${selected}">${values[row - 7][inside] || ''}</td>`;
            }
            return '<td></td>';
        };

        let rows = '';
        for (let row = 1; row <= 16; row++) {
            const tall = row >= 6 && row <= 11;
            rows += `<tr${tall ? ' class="tall"' : ''}><th${row === 7 ? ' class="on"' : ''}>${row}</th>${columns.map(col => cell(row, col)).join('')}</tr>`;
        }
        rows += `<tr class="rest"><th></th>${'<td></td>'.repeat(columns.length)}</tr>`;

        return `
            <table>
                <colgroup>
                    <col style="width:24px">
                    ${columns.map(col => `<col style="width:${wide.includes(col) ? 136 : 60}px">`).join('')}
                </colgroup>
                <thead>
                    <tr>
                        <th class="corner"><svg width="12" height="12"><path d="M11 1v10H1z" fill="#b4b6b4"/></svg></th>
                        ${columns.map(col => `<th${col === 'G' ? ' class="on"' : ''}>${col}</th>`).join('')}
                    </tr>
                </thead>
                <tbody>${rows}</tbody>
            </table>
            <div class="scroll">
                <button aria-label="Scroll up"><xl-icon name="caretUp"></xl-icon></button>
                <div class="track"><div class="thumb"></div></div>
                <button aria-label="Scroll down"><xl-icon name="caretDown"></xl-icon></button>
            </div>
        `;
    }
}

class SheetTabs extends XlElement {
    styles() {
        return `
            :host { display: flex; align-items: center; height: 27px; padding-right: 14px; background: var(--chrome); border-bottom: 1px solid #c8cac8; font-size: 11px; color: #555; }
            .arrows { display: flex; justify-content: space-between; width: 95px; height: 18px; padding: 0 39px 0 25px; border-right: 1px solid #b4b6b4; color: #bdbfbd; }
            .tab { width: 60px; padding-bottom: 1px; }
            .tab.active { height: 24px; padding: 0; align-self: flex-start; background: #fdfefd; border-bottom: 2px solid #1e7145; color: #1e7145; font-weight: 700; }
            .add { margin-left: 31px; }
            .grip { margin-left: auto; }
            .scroll { display: flex; width: 478px; height: 15px; margin-left: 12px; }
            .scroll button { width: 15px; background: #fdfefd; border: 1px solid #b4b6b4; color: #555; }
            .scroll .thumb { flex: 1; background: #fdfefd; border: 1px solid #b4b6b4; }
        `;
    }

    markup() {
        return `
            <div class="arrows">
                <button aria-label="Previous sheet"><xl-icon name="left"></xl-icon></button>
                <button aria-label="Next sheet"><xl-icon name="right"></xl-icon></button>
            </div>
            <button class="tab">Sheet1</button>
            <button class="tab active">Sheet3</button>
            <button class="add" aria-label="New sheet"><xl-icon name="plus"></xl-icon></button>
            <xl-icon class="grip" name="dots"></xl-icon>
            <div class="scroll">
                <button aria-label="Scroll left"><xl-icon name="left"></xl-icon></button>
                <div class="thumb"></div>
                <button aria-label="Scroll right"><xl-icon name="right"></xl-icon></button>
            </div>
        `;
    }
}

class StatusBar extends XlElement {
    styles() {
        return `
            :host { display: flex; align-items: center; height: 20px; padding: 0 1px 2px 6px; background: var(--ribbon); font-size: 10px; }
            .check { gap: 4px; flex: 1; justify-content: flex-start; }
            .view { width: 36px; height: 20px; }
            .view.on { background: #c6c8c6; }
            .zoom { display: flex; align-items: center; gap: 2px; margin: 0 11px 0 2px; }
            input { appearance: none; width: 96px; height: 14px; background: linear-gradient(#888, #888) center / 100% 1px no-repeat; }
            input::-webkit-slider-thumb { appearance: none; width: 5px; height: 9px; background: #444; }
        `;
    }

    markup() {
        return `
            <button class="check"><xl-icon name="access"></xl-icon>Accessibility: Investigate</button>
            <button class="view on" aria-label="Normal view"><xl-icon name="viewNormal"></xl-icon></button>
            <button class="view" aria-label="Page layout"><xl-icon name="viewPage"></xl-icon></button>
            <button class="view" aria-label="Page break preview"><xl-icon name="viewBreak"></xl-icon></button>
            <div class="zoom">
                <button aria-label="Zoom out"><xl-icon name="zoomOut"></xl-icon></button>
                <input type="range" aria-label="Zoom" min="0" max="100" value="50">
                <button aria-label="Zoom in"><xl-icon name="zoomIn"></xl-icon></button>
            </div>
            <span>100%</span>
        `;
    }
}

class TaskBar extends XlElement {
    styles() {
        return `
            :host {
                display: flex;
                align-items: stretch;
                height: 28px;
                border-top: 1px solid #2e2825;
                background: linear-gradient(100deg, #6a5b55 0%, #6c5d56 35%, #786860 42%, #65574f 50%, #75665d 56%, #64564f 66%, #6f6058 78%, #4a3e3a 92%, #3b312e 100%);
                color: #fff;
            }
            .start { width: 55px; padding: 0 6px 0 0; align-items: flex-start; }
            .start xl-icon { margin-top: -5px; }
            .apps { display: flex; gap: 3px; flex: 1; }
            .apps button { width: 40px; border: 1px solid transparent; }
            .apps .open { border-color: #b5aaa5; border-radius: 2px; background: linear-gradient(160deg, #a79d98, #83766f 60%, #8f837d); }
            .apps .front { background: linear-gradient(160deg, #dcd9d6, #b9b3ae 60%, #c9c4c0); }
            .tray { display: flex; align-items: center; gap: 9px; }
            .tray time { margin-left: 9px; }
            .tray .lang { margin: 0 8px 3px 0; }
            .show { width: 8px; height: 27px; border: 1px solid #9a8f8a; background: #5e534f; }
        `;
    }

    markup() {
        const apps = [
            ['explorer', 'open', 'Explorer'], ['gApp', '', 'Gaaiho'], ['player', '', 'Media player'], ['ie', '', 'Internet Explorer'],
            ['google', '', 'Google'], ['onenote', '', 'OneNote'], ['outlook', '', 'Outlook'], ['word', '', 'Word'],
            ['ppt', 'open', 'PowerPoint'], ['xl', 'open front', 'Excel'], ['record', 'open', 'Recorder']
        ];
        return `
            <button class="start" aria-label="Start"><xl-icon name="orb"></xl-icon></button>
            <div class="apps">
                ${apps.map(([icon, state, label]) => `<button class="${state}" aria-label="${label}"><xl-icon name="${icon}"></xl-icon></button>`).join('')}
            </div>
            <div class="tray">
                <span class="lang">EN</span>
                <xl-icon name="trayUp"></xl-icon>
                <xl-icon name="cloud"></xl-icon>
                <xl-icon name="power"></xl-icon>
                <time>11:21 PM</time>
                <button class="show" aria-label="Show desktop"></button>
            </div>
        `;
    }
}

// Video editor stamp over the bottom right corner
class DirectorMark extends XlElement {
    styles() {
        return `
            :host {
                box-sizing: border-box;
                position: absolute;
                right: 0;
                bottom: 25px;
                width: 385px;
                height: 75px;
                padding: 9px 0 0 17px;
                background: rgba(60, 62, 60, 0.48);
                color: #f6f7f6;
                pointer-events: none;
                text-shadow: 1px 2px 3px rgba(40, 40, 40, 0.5);
                white-space: nowrap;
            }
            .brand { position: absolute; left: 46px; top: 10px; font-size: 12px; color: #e2e4e2; }
            .product { font-size: 54px; font-weight: 300; line-height: 56px; }
        `;
    }

    markup() {
        return `
            <div class="brand">CyberLink</div>
            <div class="product">PowerDirector</div>
        `;
    }
}

// Register the custom elements
customElements.define('xl-icon', XlIcon);
customElements.define('title-bar', TitleBar);
customElements.define('ribbon-tabs', RibbonTabs);
customElements.define('ribbon-group', RibbonGroup);
customElements.define('ribbon-button', RibbonButton);
customElements.define('ribbon-tile', RibbonTile);
customElements.define('ribbon-select', RibbonSelect);
customElements.define('excel-ribbon', ExcelRibbon);
customElements.define('formula-bar', FormulaBar);
customElements.define('sheet-grid', SheetGrid);
customElements.define('sheet-tabs', SheetTabs);
customElements.define('status-bar', StatusBar);
customElements.define('task-bar', TaskBar);
customElements.define('director-mark', DirectorMark);
customElements.define('excel-window', ExcelWindow);
</script>
</body>
</html>
